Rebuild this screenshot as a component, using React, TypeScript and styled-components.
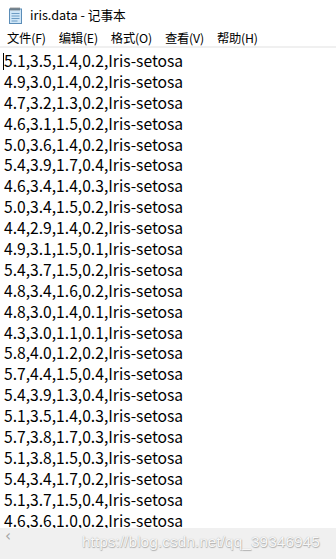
import styled, { createGlobalStyle } from 'styled-components';

const GlobalStyle = createGlobalStyle`
  html, body {
    margin: 0;
    padding: 0;
    background: #ffffff;
  }
`;

const ROWS = [
  '5.1,3.5,1.4,0.2,Iris-setosa',
  '4.9,3.0,1.4,0.2,Iris-setosa',
  '4.7,3.2,1.3,0.2,Iris-setosa',
  '4.6,3.1,1.5,0.2,Iris-setosa',
  '5.0,3.6,1.4,0.2,Iris-setosa',
  '5.4,3.9,1.7,0.4,Iris-setosa',
  '4.6,3.4,1.4,0.3,Iris-setosa',
  '5.0,3.4,1.5,0.2,Iris-setosa',
  '4.4,2.9,1.4,0.2,Iris-setosa',
  '4.9,3.1,1.5,0.1,Iris-setosa',
  '5.4,3.7,1.5,0.2,Iris-setosa',
  '4.8,3.4,1.6,0.2,Iris-setosa',
  '4.8,3.0,1.4,0.1,Iris-setosa',
  '4.3,3.0,1.1,0.1,Iris-setosa',
  '5.8,4.0,1.2,0.2,Iris-setosa',
  '5.7,4.4,1.5,0.4,Iris-setosa',
  '5.4,3.9,1.3,0.4,Iris-setosa',
  '5.1,3.5,1.4,0.3,Iris-setosa',
  '5.7,3.8,1.7,0.3,Iris-setosa',
  '5.1,3.8,1.5,0.3,Iris-setosa',
  '5.4,3.4,1.7,0.2,Iris-setosa',
  '5.1,3.7,1.5,0.4,Iris-setosa',
  '4.6,3.6,1.0,0.2,Iris-setosa',
];

const MENUS = ['文件(F)', '编辑(E)', '格式(O)', '查看(V)', '帮助(H)'];

const App = () => {
  return (
    <>
      <GlobalStyle />
      <Window>
        <TitleBar>
          <NoteIcon width='15' height='17' viewBox='0 0 15 17'>
            <rect x='1.5' y='2' width='12' height='14.5' fill='#cfe6f7' stroke='#5b8db8' />
            <path d='M3.5 6.5h8M3.5 9h8M3.5 11.5h8M3.5 14h6' stroke='#6d9cc4' strokeWidth='1' />
            <path d='M3 0.5v3M5 0.5v3M7 0.5v3M9 0.5v3M11 0.5v3' stroke='#444' strokeWidth='1' />
          </NoteIcon>
          <Title>iris.data - 记事本</Title>
        </TitleBar>
        <MenuBar>
          {MENUS.map(m => (
            <MenuItem key={m}>{m}</MenuItem>
          ))}
        </MenuBar>
        <Editor>
          {ROWS.map((r, i) => (
            <Line key={i} $caret={i === 0}>
              {r}
            </Line>
          ))}
        </Editor>
        <Footer>
          <ScrollBar>
            <Arrow>‹</Arrow>
          </ScrollBar>
          <StatusStrip />
          <Watermark>https://blog.csdn.net/qq_39346945</Watermark>
        </Footer>
      </Window>
    </>
  );
};

const Window = styled.div`
  width: 336px;
  height: 559px;
  display: flex;
  flex-direction: column;
  background: #ffffff;
  overflow: hidden;
  font-family: 'Noto Sans CJK SC', sans-serif;
`;

const TitleBar = styled.div`
  height: 29px;
  display: flex;
  align-items: center;
  padding-left: 8px;
  gap: 7px;
`;

const NoteIcon = styled.svg`
  flex-shrink: 0;
  margin-top: 1px;
`;

const Title = styled.span`
  font-family: 'Noto Sans CJK SC', sans-serif;
  font-size: 12.7px;
  color: #000000;
`;

const MenuBar = styled.div`
  height: 17px;
  display: flex;
  align-items: center;
  padding-left: 7px;
  gap: 13px;
  border-bottom: 2px solid #f0f0f0;
`;

const MenuItem = styled.span`
  font-family: 'Noto Sans CJK SC', sans-serif;
  font-size: 12.3px;
  color: #000000;
  letter-spacing: -0.2px;
`;

const Editor = styled.div`
  flex: 1;
  overflow: hidden;
  padding: 3px 0 0 4px;
  background: #ffffff;
`;

const Line = styled.div<{ $caret?: boolean }>`
  position: relative;
  font-family: 'Noto Sans CJK SC', sans-serif;
  font-size: 15.65px;
  line-height: 20.9px;
  height: 20.9px;
  color: #000000;
  white-space: nowrap;

  ${p =>
    p.$caret &&
    `
    &::before {
      content: '';
      position: absolute;
      left: -1px;
      top: 2px;
      width: 1px;
      height: 17px;
      background: #000;
    }
  `}
`;

const Footer = styled.div`
  position: relative;
  height: 31px;
  flex-shrink: 0;
  display: flex;
  flex-direction: column;
  background: #f0f0f0;
`;

const ScrollBar = styled.div`
  height: 17px;
  display: flex;
  align-items: center;
  padding-left: 5px;
`;

const Arrow = styled.span`
  font-family: 'DejaVu Sans', sans-serif;
  font-size: 15px;
  line-height: 1;
  color: #a3a3a3;
`;

const StatusStrip = styled.div`
  flex: 1;
  background: #f0f0f0;
`;

const Watermark = styled.span`
  position: absolute;
  left: 82px;
  top: 5px;
  font-family: 'Liberation Sans', Arial, sans-serif;
  font-size: 15.5px;
  color: #f7f7f7;
  text-shadow: 0 0 1px #a8a8a8, 0.5px 0.5px 1px #b0b0b0;
  white-space: nowrap;
`;

export default App;
